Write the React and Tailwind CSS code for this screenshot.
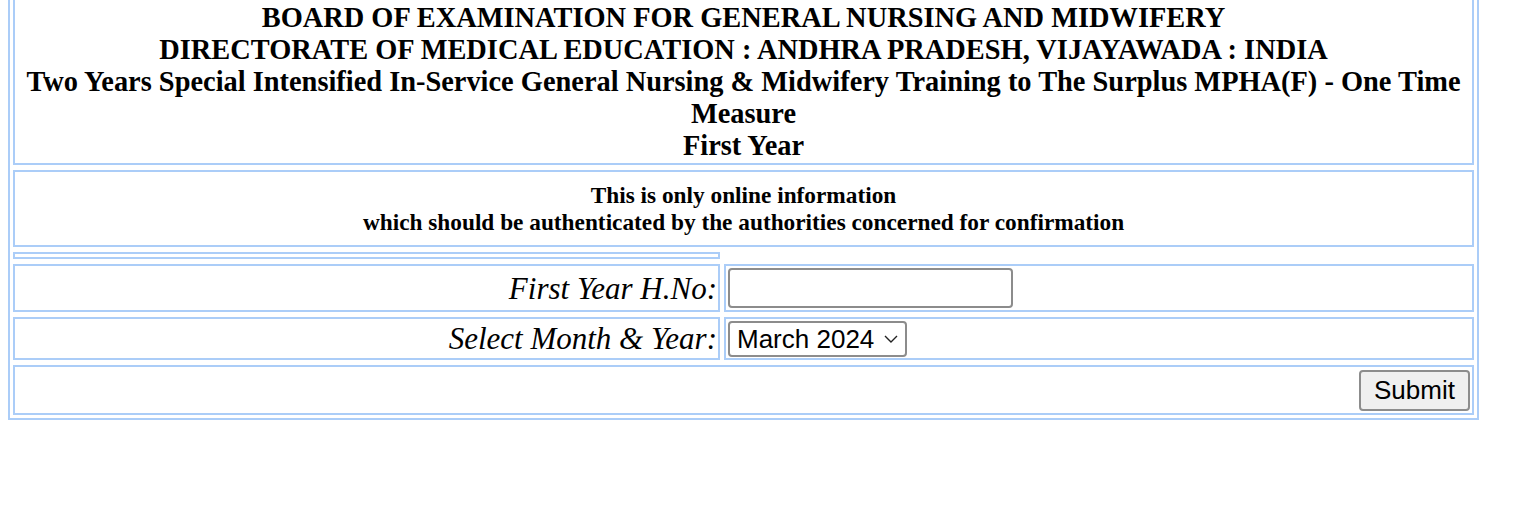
const cell = "border-2 border-[#abcdf8]";

function Chevron() {
  return (
    <svg
      className="pointer-events-none absolute right-[9px] top-[14px]"
      width="14"
      height="8"
      viewBox="0 0 14 8"
      fill="none"
    >
      <path d="M1 1l6 6 6-6" stroke="#222" strokeWidth="1.4" />
    </svg>
  );
}

export default function App() {
  return (
    <div className="min-h-[519px] bg-white text-black font-['Liberation_Serif','Times_New_Roman',serif]">
      <div className="-mt-[7px] ml-[8px] w-[1471px] border-2 border-[#abcdf8] p-[3px] flex flex-col gap-[5px]">
        {/* title */}
        <div className={`${cell} px-[2px] pt-[2px] pb-[1px] text-center text-[28.4px] font-bold leading-[32px]`}>
          <div>BOARD OF EXAMINATION FOR GENERAL NURSING AND MIDWIFERY</div>
          <div>DIRECTORATE OF MEDICAL EDUCATION : ANDHRA PRADESH, VIJAYAWADA : INDIA</div>
          <div>
            Two Years Special Intensified In-Service General Nursing &amp; Midwifery Training to The Surplus MPHA(F) - One Time
          </div>
          <div>Measure</div>
          <div>First Year</div>
        </div>

        {/* notice */}
        <div className={`${cell} h-[77px] flex flex-col items-center justify-center text-[23.3px] font-bold leading-[27px]`}>
          <div>This is only online information</div>
          <div>which should be authenticated by the authorities concerned for confirmation</div>
        </div>

        <div className={`${cell} w-[707px] h-[7px]`} />

        {/* hall ticket */}
        <div className="flex gap-[4px] h-[48px]">
          <div className={`${cell} w-[707px] flex items-center justify-end pr-[1px] italic text-[31px] leading-none`}>
            First Year H.No:
          </div>
          <div className={`${cell} flex-1 p-[2px]`}>
            <input
              type="text"
              className="block w-[285px] h-[40px] rounded-[4px] border-2 border-[#8c8c8c] bg-white px-[4px] font-['Liberation_Sans',Arial,sans-serif] text-[26px] outline-none"
            />
          </div>
        </div>

        {/* month */}
        <div className="flex gap-[4px] h-[43px]">
          <div className={`${cell} w-[707px] flex items-center justify-end pr-[1px] italic text-[31px] leading-none`}>
            Select Month &amp; Year:
          </div>
          <div className={`${cell} flex-1 px-[2px] pt-[2px]`}>
            <div className="relative w-[179px] h-[36px]">
              <select
                defaultValue="March 2024"
                className="appearance-none block w-full h-full rounded-[4px] border-2 border-[#8c8c8c] bg-white pl-[7px] pr-[30px] font-['Liberation_Sans',Arial,sans-serif] text-[26px] leading-[32px] text-black outline-none"
              >
                <option>March 2024</option>
              </select>
              <Chevron />
            </div>
          </div>
        </div>

        {/* submit */}
        <div className={`${cell} h-[50px] flex items-center justify-end p-[2px]`}>
          <button className="w-[111px] h-[41px] rounded-[4px] border-2 border-[#8c8c8c] bg-[#efefef] font-['Liberation_Sans',Arial,sans-serif] text-[26px] leading-none text-black">
            Submit
          </button>
        </div>
      </div>
    </div>
  );
}
